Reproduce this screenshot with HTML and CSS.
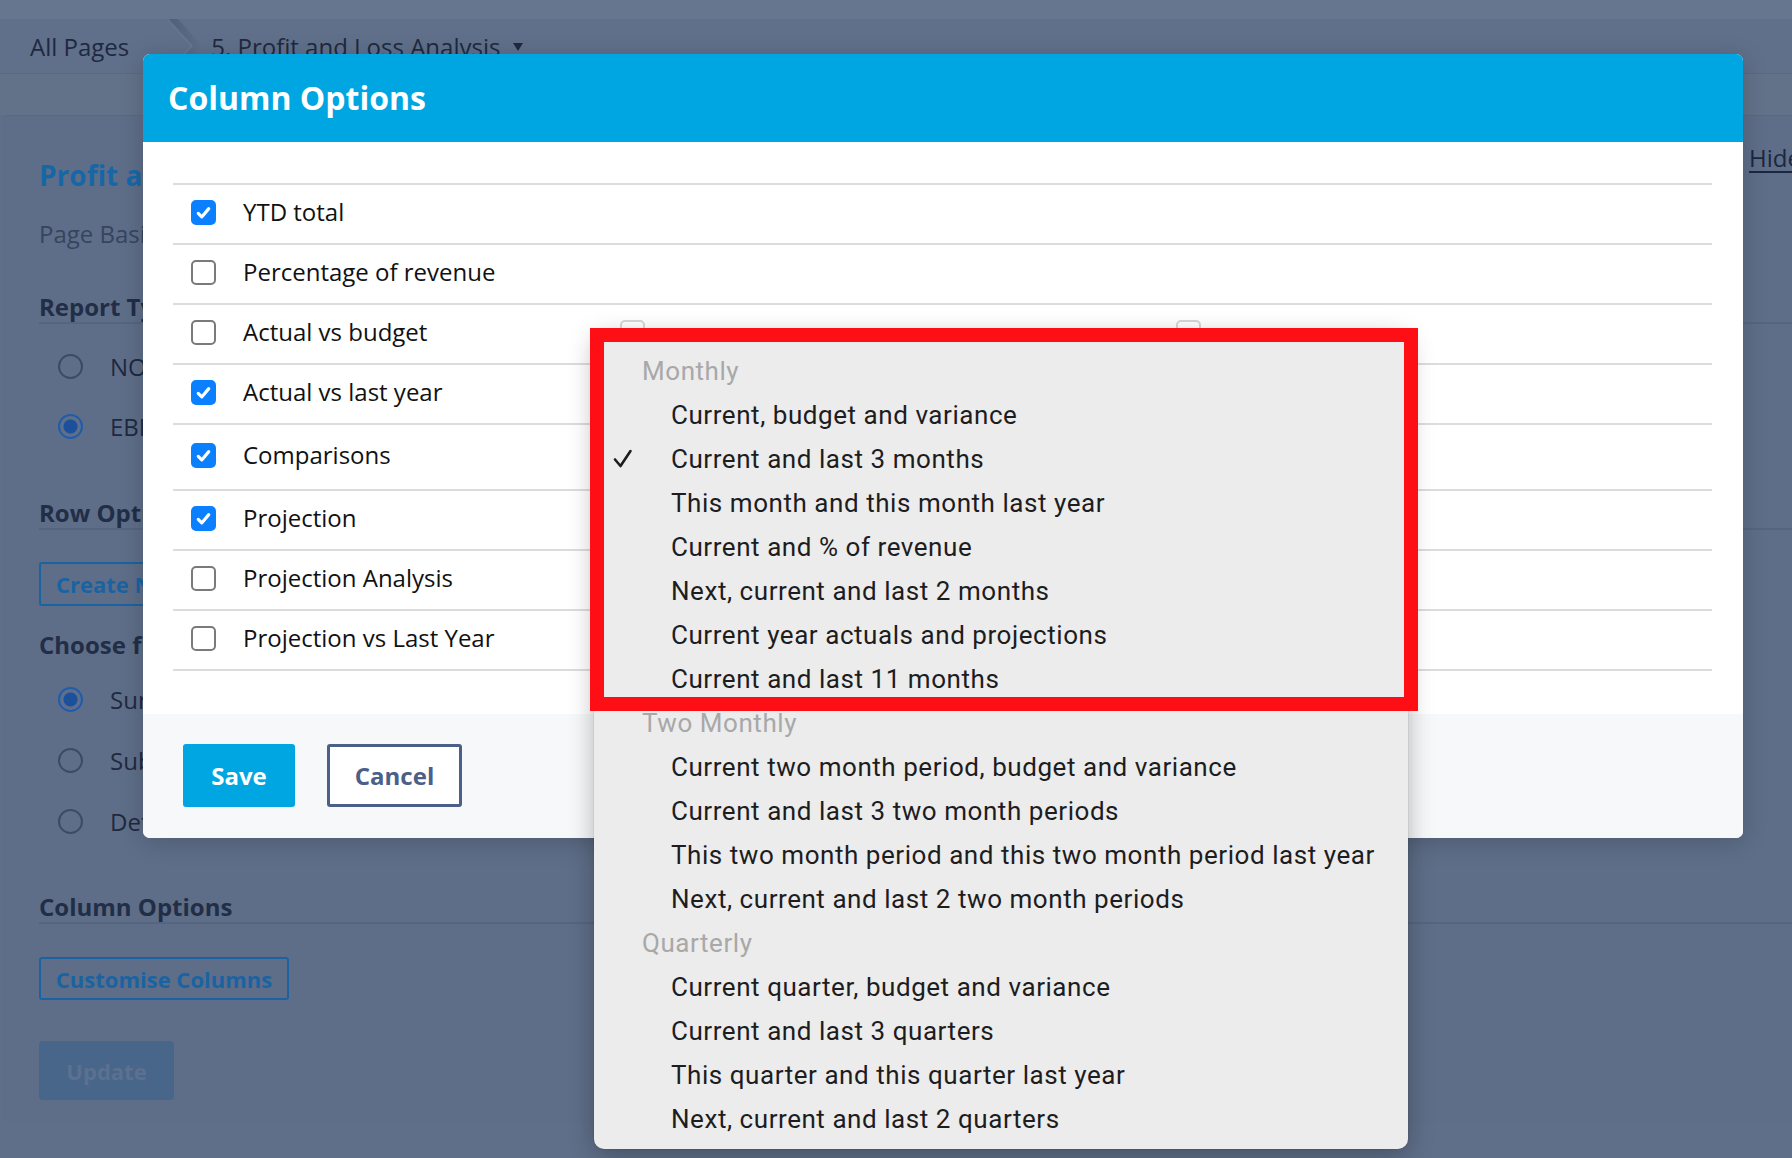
FILE: index.html
```html
<!DOCTYPE html>
<html lang="en">
<head>
<meta charset="utf-8">
<title>Column Options</title>
<link rel="stylesheet" href="styles.css">
</head>
<body>
<div class="page">
  <div class="topstrip"></div>
  <nav class="crumbs">
    <span class="crumb">All Pages</span>
    <svg class="sep" width="34" height="54" viewBox="0 0 34 54">
      <defs>
        <linearGradient id="sh" x1="0" y1="0" x2="1" y2="0">
          <stop offset="0" stop-color="rgba(20,30,50,0.22)"/>
          <stop offset="1" stop-color="rgba(20,30,50,0)"/>
        </linearGradient>
      </defs>
      <path d="M0 0 L24 27 L0 54 L10 54 L34 27 L10 0 Z" fill="url(#sh)"/>
      <path d="M0 0 L24 27 L0 54" fill="none" stroke="rgba(255,255,255,0.06)" stroke-width="2"/>
    </svg>
    <span class="crumb">5. Profit and Loss Analysis</span>
    <svg class="caret" width="12" height="10" viewBox="0 0 12 10"><path d="M1 1 H11 L6 9 Z" fill="#1e2940"/></svg>
  </nav>
  <div class="tabstrip"></div>
  <main class="card">
    <div class="title-row">
      <h1 class="page-title">Profit and Loss Analysis</h1>
      <a class="hide">Hide</a>
    </div>
    <p class="basis">Page Basis: Monthly</p>
    <h2 class="sec">Report Type</h2>
    <div class="radios">
      <div class="radio"><span class="ring"></span><span>NOPAT</span></div>
      <div class="radio on"><span class="ring"></span><span>EBITDA</span></div>
    </div>
    <h2 class="sec">Row Options</h2>
    <button class="outline create">Create New Row</button>
    <h3 class="choose">Choose from</h3>
    <div class="radios tight">
      <div class="radio on"><span class="ring"></span><span>Summary</span></div>
      <div class="radio"><span class="ring"></span><span>Subtotals</span></div>
      <div class="radio"><span class="ring"></span><span>Detailed</span></div>
    </div>
    <h2 class="sec">Column Options</h2>
    <button class="outline cust">Customise Columns</button>
    <button class="update">Update</button>
  </main>
</div>

<div class="modal">
  <div class="modal-head"><h2 class="modal-title">Column Options</h2></div>
  <div class="modal-body">
    <ul class="opts">
      <li class="opt"><span class="cb on"><svg viewBox="0 0 24 24"><path d="M6 12.5 L10 16.5 L18 7"/></svg></span><span class="lbl">YTD total</span></li>
      <li class="opt"><span class="cb"></span><span class="lbl">Percentage of revenue</span></li>
      <li class="opt"><span class="cb"></span><span class="lbl">Actual vs budget</span>
        <span class="sub s1"><span class="cb faint"></span><span class="sublbl">Budget</span></span>
        <span class="sub s2"><span class="cb faint"></span><span class="sublbl">Variance</span></span>
      </li>
      <li class="opt"><span class="cb on"><svg viewBox="0 0 24 24"><path d="M6 12.5 L10 16.5 L18 7"/></svg></span><span class="lbl">Actual vs last year</span></li>
      <li class="opt tall"><span class="cb on"><svg viewBox="0 0 24 24"><path d="M6 12.5 L10 16.5 L18 7"/></svg></span><span class="lbl">Comparisons</span></li>
      <li class="opt"><span class="cb on"><svg viewBox="0 0 24 24"><path d="M6 12.5 L10 16.5 L18 7"/></svg></span><span class="lbl">Projection</span></li>
      <li class="opt"><span class="cb"></span><span class="lbl">Projection Analysis</span></li>
      <li class="opt"><span class="cb"></span><span class="lbl">Projection vs Last Year</span></li>
    </ul>
  </div>
  <div class="modal-foot">
    <button class="btn-save">Save</button>
    <button class="btn-cancel">Cancel</button>
  </div>
</div>

<div class="menu">
  <div class="grp">Monthly</div>
  <div class="item">Current, budget and variance</div>
  <div class="item sel"><svg class="tick" width="20" height="20" viewBox="0 0 20 20"><path d="M2 10.5 L7.5 17 L17.5 2"/></svg>Current and last 3 months</div>
  <div class="item">This month and this month last year</div>
  <div class="item">Current and % of revenue</div>
  <div class="item">Next, current and last 2 months</div>
  <div class="item">Current year actuals and projections</div>
  <div class="item">Current and last 11 months</div>
  <div class="grp">Two Monthly</div>
  <div class="item">Current two month period, budget and variance</div>
  <div class="item">Current and last 3 two month periods</div>
  <div class="item">This two month period and this two month period last year</div>
  <div class="item">Next, current and last 2 two month periods</div>
  <div class="grp">Quarterly</div>
  <div class="item">Current quarter, budget and variance</div>
  <div class="item">Current and last 3 quarters</div>
  <div class="item">This quarter and this quarter last year</div>
  <div class="item">Next, current and last 2 quarters</div>
</div>

<div class="annot"></div>
</body>
</html>
```

FILE: styles.css
```css
html, body {
  margin: 0;
  padding: 0;
}
body {
  width: 1792px;
  height: 1158px;
  overflow: hidden;
  position: relative;
  background: #5f6f89;
  font-family: "Open Sans", "DejaVu Sans", sans-serif;
}

/* ---------- dimmed page behind ---------- */
.page {
  display: flex;
  flex-direction: column;
}
.topstrip {
  height: 19px;
  background: #66768f;
}
.crumbs {
  height: 54px;
  background: #60708a;
  display: flex;
  align-items: center;
  padding-left: 30px;
  font-size: 24px;
  color: #1e2940;
}
.sep {
  margin: 0 9px 0 39px;
  flex: none;
}
.caret {
  margin-left: 12px;
  margin-top: 2px;
}
.tabstrip {
  height: 42px;
  box-sizing: border-box;
  background: #627289;
  border-top: 1px solid #5a6983;
}
.card {
  width: 1800px;
  height: 1007px;
  box-sizing: border-box;
  margin-left: 2px;
  padding-left: 37px;
  background: #5e6e88;
  border-radius: 6px;
  border-top: 1px solid #596882;
  display: flex;
  flex-direction: column;
  align-items: flex-start;
}
.title-row {
  margin-top: 41px;
  height: 36px;
  width: 100%;
  display: flex;
  align-items: flex-start;
}
.page-title {
  margin: 0;
  font-size: 28px;
  line-height: 36px;
  font-weight: 700;
  color: #1767a7;
}
.hide {
  margin-left: auto;
  margin-right: 1px;
  margin-top: -14px;
  font-size: 24px;
  line-height: 30px;
  color: #1b2740;
  text-decoration: underline;
  text-underline-offset: 4px;
}
.basis {
  margin: 26px 0 0;
  font-size: 24px;
  line-height: 30px;
  color: #37445e;
}
.sec {
  margin: 43px 0 0;
  width: 100%;
  font-size: 24px;
  line-height: 30px;
  font-weight: 700;
  color: #222d46;
  border-bottom: 2px solid #56657f;
}
.sec + .radios { margin-top: 12px; }
.radios {
  display: flex;
  flex-direction: column;
}
.radio {
  height: 60px;
  display: flex;
  align-items: center;
  padding-left: 19px;
  font-size: 24px;
  color: #1e2940;
  gap: 27px;
}
.radios.tight { margin-top: 9px; }
.radios.tight .radio { height: 61px; }
.ring {
  width: 25px;
  height: 25px;
  box-sizing: border-box;
  border-radius: 50%;
  border: 2px solid #3d4a64;
  flex: none;
}
.radio.on .ring {
  border: 2px solid #1f5cad;
  background: radial-gradient(circle, #1c4f9c 0 6.5px, #5f6f89 7.5px);
}
.sec:nth-of-type(2) { margin-top: 42px; }
.outline {
  font-family: "Open Sans", sans-serif;
  font-weight: 700;
  font-size: 22px;
  color: #1a63a2;
  background: transparent;
  border: 2px solid #1a63a2;
  border-radius: 3px;
  padding: 0 15px;
}
.create {
  margin-top: 32px;
  height: 44px;
}
.choose {
  margin: 24px 0 0;
  font-size: 24px;
  line-height: 30px;
  font-weight: 700;
  color: #222d46;
}
.tight + .sec { margin-top: 40px; }
.cust {
  margin-top: 33px;
  height: 43px;
  width: 250px;
  padding: 0;
}
.update {
  margin-top: 41px;
  width: 135px;
  height: 59px;
  border: 0;
  border-radius: 4px;
  background: #48668a;
  color: #5c7090;
  font-family: "Open Sans", sans-serif;
  font-weight: 700;
  font-size: 22px;
}

/* ---------- modal ---------- */
.modal {
  position: absolute;
  left: 143px;
  top: 54px;
  width: 1600px;
  background: #fff;
  border-radius: 7px;
  overflow: hidden;
  box-shadow: 0 4px 24px rgba(0, 0, 0, 0.18);
}
.modal-head {
  height: 88px;
  background: #00a6e2;
  display: flex;
  align-items: center;
  padding-left: 25px;
}
.modal-title {
  margin: 0;
  color: #fff;
  font-size: 32px;
  font-weight: 700;
  line-height: 40px;
}
.modal-body {
  padding: 41px 31px 43px 30px;
}
.opts {
  list-style: none;
  margin: 0;
  padding: 0;
  border-top: 2px solid #dcdcdc;
}
.opt {
  height: 58px;
  border-bottom: 2px solid #dcdcdc;
  display: flex;
  align-items: center;
  padding-left: 18px;
  gap: 27px;
  font-size: 24px;
  line-height: 30px;
  color: #111;
  position: relative;
}
.opt .lbl { margin-top: -4px; }
.opt .cb { margin-top: -3px; }
.opt.tall { height: 64px; }
.cb {
  width: 25px;
  height: 25px;
  box-sizing: border-box;
  border: 2px solid #7a7a7a;
  border-radius: 5px;
  background: #fff;
  flex: none;
  display: flex;
  align-items: center;
  justify-content: center;
}
.cb.on {
  background: #0a80ff;
  border-color: #0a80ff;
}
.cb svg {
  width: 22px;
  height: 22px;
  fill: none;
  stroke: #fff;
  stroke-width: 3.6;
  stroke-linecap: round;
  stroke-linejoin: round;
}
.cb.faint { border-color: #d6d6d6; }
.sub {
  position: absolute;
  top: 18px;
  display: flex;
  gap: 22px;
  color: #d0d0d0;
  font-size: 22px;
}
.s1 { left: 447px; }
.s2 { left: 1003px; }
.modal-foot {
  height: 124px;
  box-sizing: border-box;
  background: #f7f8fa;
  padding: 30px 0 0 40px;
  display: flex;
  align-items: flex-start;
  gap: 32px;
}
.btn-save, .btn-cancel {
  height: 63px;
  font-family: "Open Sans", sans-serif;
  font-weight: 700;
  font-size: 24px;
  border-radius: 3px;
}
.btn-save {
  width: 112px;
  background: #00a6e2;
  color: #fff;
  border: 0;
}
.btn-cancel {
  width: 135px;
  background: #fff;
  color: #4b6088;
  border: 3px solid #4b6088;
}

/* ---------- native select popup ---------- */
.menu {
  position: absolute;
  left: 594px;
  top: 331px;
  width: 814px;
  box-sizing: border-box;
  padding: 18px 0 8px;
  background: #ececec;
  border-radius: 10px;
  box-shadow: 0 6px 26px rgba(0, 0, 0, 0.28), 0 0 0 1px rgba(0, 0, 0, 0.05);
  font-family: Roboto, "Noto Sans", sans-serif;
  font-size: 26px;
  letter-spacing: 0.55px;
  color: #1d1d1f;
}
.grp {
  height: 44px;
  line-height: 44px;
  padding-left: 48px;
  color: #a8a8a8;
}
.item {
  height: 44px;
  line-height: 44px;
  padding-left: 77px;
  position: relative;
  white-space: nowrap;
}
.tick {
  position: absolute;
  left: 19px;
  top: 12px;
  fill: none;
  stroke: #1d1d1f;
  stroke-width: 2.6;
  stroke-linecap: round;
  stroke-linejoin: round;
}

/* ---------- red annotation frame ---------- */
.annot {
  position: absolute;
  left: 590px;
  top: 328px;
  width: 828px;
  height: 383px;
  box-sizing: border-box;
  border: 14px solid #fe0f16;
}
```
